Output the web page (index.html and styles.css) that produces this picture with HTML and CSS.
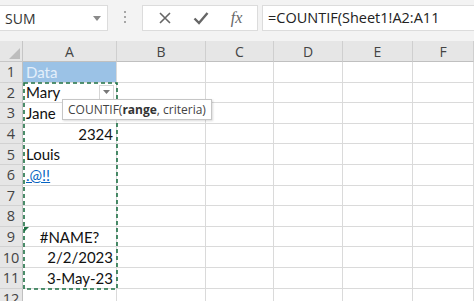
FILE: index.html
```html
<!DOCTYPE html>
<html>
<head>
    <title>COUNTIF</title>
    <link rel="stylesheet" href="styles.css">
</head>
<body>
    <div class="toolbar">
        <div class="namebox">
            <span>SUM</span>
            <svg class="caret" width="8" height="5" viewBox="0 0 8 5"><path d="M0 0 L8 0 L4 5 Z" fill="#8a8a8a"/></svg>
        </div>
        <div class="grip"><i></i><i></i><i></i></div>
        <div class="fx-buttons">
            <svg width="14" height="14" viewBox="0 0 14 14"><path d="M2 2 L12 12 M12 2 L2 12" stroke="#666" stroke-width="1.6" fill="none"/></svg>
            <svg width="16" height="14" viewBox="0 0 16 14"><path d="M1.5 7.5 L6 12 L14.5 2" stroke="#666" stroke-width="2.4" fill="none"/></svg>
            <span class="fx">fx</span>
        </div>
        <div class="formula">=COUNTIF(Sheet1!A2:A11</div>
    </div>

    <div class="sheet">
        <div class="grid">
            <div class="corner"><svg width="11" height="11" viewBox="0 0 11 11"><path d="M11 0 L11 11 L0 11 Z" fill="#bdbdbd"/></svg></div>
            <div class="colhead">A</div>
            <div class="colhead">B</div>
            <div class="colhead">C</div>
            <div class="colhead">D</div>
            <div class="colhead">E</div>
            <div class="colhead">F</div>

            <div class="rowhead">1</div>
            <div class="cell head-fill">Data</div>
            <div class="cell"></div><div class="cell"></div><div class="cell"></div><div class="cell"></div><div class="cell"></div>

            <div class="rowhead">2</div>
            <div class="cell">Mary<span class="drop"><svg width="7" height="4" viewBox="0 0 7 4"><path d="M0 0 L7 0 L3.5 4 Z" fill="#777"/></svg></span></div>
            <div class="cell"></div><div class="cell"></div><div class="cell"></div><div class="cell"></div><div class="cell"></div>

            <div class="rowhead">3</div>
            <div class="cell">Jane</div>
            <div class="cell"></div><div class="cell"></div><div class="cell"></div><div class="cell"></div><div class="cell"></div>

            <div class="rowhead">4</div>
            <div class="cell right">2324</div>
            <div class="cell"></div><div class="cell"></div><div class="cell"></div><div class="cell"></div><div class="cell"></div>

            <div class="rowhead">5</div>
            <div class="cell">Louis</div>
            <div class="cell"></div><div class="cell"></div><div class="cell"></div><div class="cell"></div><div class="cell"></div>

            <div class="rowhead">6</div>
            <div class="cell"><span class="link">.@!!</span></div>
            <div class="cell"></div><div class="cell"></div><div class="cell"></div><div class="cell"></div><div class="cell"></div>

            <div class="rowhead">7</div>
            <div class="cell"></div>
            <div class="cell"></div><div class="cell"></div><div class="cell"></div><div class="cell"></div><div class="cell"></div>

            <div class="rowhead">8</div>
            <div class="cell"></div>
            <div class="cell"></div><div class="cell"></div><div class="cell"></div><div class="cell"></div><div class="cell"></div>

            <div class="rowhead">9</div>
            <div class="cell center"><span class="err-flag"></span>#NAME?</div>
            <div class="cell"></div><div class="cell"></div><div class="cell"></div><div class="cell"></div><div class="cell"></div>

            <div class="rowhead">10</div>
            <div class="cell right">2/2/2023</div>
            <div class="cell"></div><div class="cell"></div><div class="cell"></div><div class="cell"></div><div class="cell"></div>

            <div class="rowhead">11</div>
            <div class="cell right">3-May-23</div>
            <div class="cell"></div><div class="cell"></div><div class="cell"></div><div class="cell"></div><div class="cell"></div>

            <div class="rowhead">12</div>
            <div class="cell"></div>
            <div class="cell"></div><div class="cell"></div><div class="cell"></div><div class="cell"></div><div class="cell"></div>
        </div>

        <!-- copy range marquee A2:A11 -->
        <svg class="ants" width="96" height="210" viewBox="0 0 96 210">
            <rect x="1" y="1" width="93" height="206" fill="none" stroke="#1e7145" stroke-width="1.6" stroke-dasharray="4 3"/>
        </svg>

        <div class="tip">COUNTIF(<b>range</b>, criteria)</div>
    </div>
</body>
</html>
```

FILE: styles.css
```css
body {
    margin: 0;
    width: 474px;
    height: 301px;
    overflow: hidden;
    background-color: #ffffff;
    font-family: 'Lato', 'Noto Sans', sans-serif;
}

/* Formula bar */
.toolbar {
    display: flex;
    align-items: flex-start;
    height: 41px;
    padding-top: 5px;
    box-sizing: border-box;
    background-color: #f3f3f3;
}

.namebox {
    display: flex;
    align-items: center;
    justify-content: space-between;
    width: 108px;
    height: 26px;
    box-sizing: border-box;
    padding: 0 6px 0 5px;
    background-color: #ffffff;
    border: 1px solid #dcdcdc;
    border-left: none;
    font-family: 'Open Sans', 'Noto Sans', sans-serif;
    font-size: 14px;
    color: #333;
}

.grip {
    display: flex;
    flex-direction: column;
    gap: 3px;
    width: 34px;
    align-items: center;
    padding-top: 6px;
}

.grip i {
    width: 2px;
    height: 2px;
    background-color: #a6a6a6;
}

.fx-buttons {
    display: flex;
    align-items: center;
    justify-content: space-around;
    width: 116px;
    height: 26px;
    box-sizing: border-box;
    padding: 0 4px;
    background-color: #ffffff;
    border: 1px solid #dcdcdc;
}

.fx {
    font-family: 'Liberation Serif', serif;
    font-style: italic;
    font-size: 16px;
    color: #666;
}

.formula {
    flex: 1;
    margin-left: 4px;
    height: 26px;
    box-sizing: border-box;
    padding-left: 5px;
    line-height: 24px;
    background-color: #ffffff;
    border: 1px solid #dcdcdc;
    border-right: none;
    font-family: 'Open Sans', 'Noto Sans', sans-serif;
    font-size: 14.5px;
    color: #222;
    white-space: nowrap;
}

/* Sheet grid */
.sheet {
    position: relative;
    height: 260px;
    overflow: hidden;
}

.grid {
    display: grid;
    grid-template-columns: 23px 94px 89px 68px 69px 70px 61px;
    grid-template-rows: 21px;
    grid-auto-rows: 20.6px;
}

.corner {
    display: flex;
    align-items: flex-end;
    justify-content: flex-end;
    padding: 0 2px 2px 0;
    background-color: #e6e6e6;
    border-right: 1px solid #c6c6c6;
    border-bottom: 1px solid #c6c6c6;
}

.colhead {
    display: flex;
    align-items: center;
    justify-content: center;
    background-color: #e6e6e6;
    border-right: 1px solid #cfcfcf;
    border-bottom: 1px solid #c0c0c0;
    font-family: 'Open Sans', 'Noto Sans', sans-serif;
    font-size: 14px;
    color: #444;
}

.rowhead {
    display: flex;
    align-items: center;
    justify-content: center;
    background-color: #e6e6e6;
    border-right: 1px solid #c0c0c0;
    border-bottom: 1px solid #d2d2d2;
    font-family: 'Open Sans', 'Noto Sans', sans-serif;
    font-size: 14.5px;
    color: #444;
}

.cell {
    position: relative;
    display: flex;
    align-items: center;
    padding: 0 3px;
    border-right: 1px solid #dadada;
    border-bottom: 1px solid #dadada;
    font-size: 15px;
    color: #111;
    white-space: nowrap;
}

.right {
    justify-content: flex-end;
}

.center {
    justify-content: center;
}

.head-fill {
    background-color: #9bc2e6;
    color: #e4effa;
}

.link {
    color: #0563c1;
    text-decoration: underline;
}

.drop {
    position: absolute;
    right: 2px;
    top: 2px;
    width: 15px;
    height: 15px;
    box-sizing: border-box;
    display: flex;
    align-items: center;
    justify-content: center;
    background-color: #ffffff;
    border: 1px solid #d6d6d6;
}

.err-flag {
    position: absolute;
    left: 1px;
    top: 0;
    width: 0;
    height: 0;
    border-top: 5px solid #1e7145;
    border-right: 5px solid transparent;
}

.ants {
    position: absolute;
    left: 23px;
    top: 41px;
}

.tip {
    position: absolute;
    left: 62px;
    top: 58px;
    height: 21px;
    box-sizing: border-box;
    padding: 0 5px;
    line-height: 19px;
    background-color: #ffffff;
    border: 1px solid #c6c6c6;
    box-shadow: 1px 1px 2px rgba(0, 0, 0, 0.15);
    font-family: 'Open Sans', 'Noto Sans', sans-serif;
    font-size: 12px;
    color: #444;
    white-space: nowrap;
}

.tip b {
    color: #333;
}
```
